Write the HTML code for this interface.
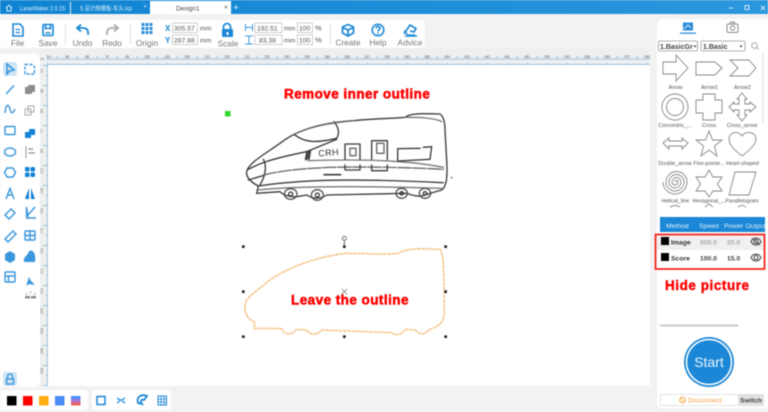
<!DOCTYPE html>
<html><head><meta charset="utf-8">
<style>
html,body{margin:0;padding:0;width:768px;height:412px;overflow:hidden;background:#f2f2f2}
svg{display:block;position:absolute;left:0;top:0;filter:blur(.4px)}
text{font-family:"Liberation Sans","Noto Sans CJK SC",sans-serif}
</style></head><body>
<svg width="768" height="412" viewBox="0 0 768 412" xmlns="http://www.w3.org/2000/svg">
<defs>
<linearGradient id="tb" x1="0" x2="1" y1="0" y2="0"><stop offset="0" stop-color="#0f84d2"/><stop offset="1" stop-color="#2b97de"/></linearGradient>
<pattern id="rt" x="47" y="0" width="20" height="10" patternUnits="userSpaceOnUse"><path d="M.5 3V10M2.500 8V10M4.500 8V10M6.500 8V10M8.500 8V10M10.500 6V10M12.500 8V10M14.500 8V10M16.500 8V10M18.500 8V10" stroke="#7fb3d8" stroke-width=".8" fill="none"/></pattern>
<pattern id="rl" x="0" y="65" width="10" height="20" patternUnits="userSpaceOnUse"><path d="M3 .5H10M8 2.500H10M8 4.500H10M8 6.500H10M8 8.500H10M6 10.500H10M8 12.500H10M8 14.500H10M8 16.500H10M8 18.500H10" stroke="#7fb3d8" stroke-width=".8" fill="none"/></pattern>
</defs>
<rect width="768" height="412" fill="#f2f2f2"/>
<!-- title bar -->
<rect width="768" height="14" fill="url(#tb)"/>
<path d="M6 8L9 5.200L12 8M7 7.500V11H11V7.500" stroke="#d5eaf8" fill="none"/>
<text x="20" y="10.500" font-size="6.400" fill="#d9edfa" textLength="45" lengthAdjust="spacingAndGlyphs">LaserMaker 2.0.15</text>
<rect x="70" y="2" width="1" height="12" fill="#d5eaf8"/>
<text x="80" y="10.500" font-size="6" fill="#d9edfa" textLength="52" lengthAdjust="spacingAndGlyphs">5.设计图模板-车头.lcp</text>
<text x="143.500" y="8.500" font-size="6" fill="#d9edfa">×</text>
<rect x="150" y="1" width="81" height="13" fill="#fff"/>
<text x="176" y="10.500" font-size="6.400" fill="#444">Design1</text>
<text x="224" y="9.500" font-size="7" fill="#555">×</text>
<text x="233.500" y="10.500" font-size="9" fill="#fff">+</text>
<path d="M729 8H733" stroke="#d5eaf8"/><rect x="745" y="5.500" width="4" height="4" fill="none" stroke="#d5eaf8"/><path d="M761 6L765 10M765 6L761 10" stroke="#d5eaf8"/>
<!-- main toolbar -->
<rect x="-6" y="20" width="431" height="28" rx="5" fill="#fff"/>
<rect x="65" y="24" width="1" height="20" fill="#ddd"/><rect x="130" y="24" width="1" height="20" fill="#ddd"/><rect x="330" y="24" width="1" height="20" fill="#ddd"/>
<g font-size="8.300" fill="#777" text-anchor="middle">
<text x="17.500" y="46">File</text><text x="48" y="46">Save</text><text x="82.500" y="46">Undo</text><text x="112" y="46">Redo</text><text x="147" y="46">Origin</text><text x="228" y="46.500">Scale</text><text x="348" y="45.500">Create</text><text x="378" y="45.500">Help</text><text x="410" y="45.500">Advice</text>
</g>
<g fill="none" stroke="#1b87d6" stroke-width="1.600">
<path d="M13 24H20L23 27.500V36H13Z"/><path d="M15.500 29.500H20M15.500 32.500H20" stroke-width="1.200"/>
<rect x="43" y="24.500" width="10" height="11" rx="1"/><path d="M45.500 25V28.500H50.500V25M45.500 33H50.500"/>
<path d="M88 35C89 28 85 27.500 78 28M81 24.500L77 28L81 31.500" stroke-width="1.800"/>
<path d="M107 35C106 28 110 27.500 117 28M114 24.500L118 28L114 31.500" stroke="#aaa" stroke-width="1.800"/>
<path d="M223.500 29V27C223.500 22.500 230.500 22.500 230.500 27V29" stroke-width="1.800"/>
<path d="M348 24.500L353.500 27V33L348 36L342.500 33V27ZM342.500 27.500L348 30L353.500 27.500M348 30V36" stroke-width="1.700"/>
<circle cx="378" cy="30" r="5.800" stroke-width="1.500"/><path d="M376 28.500C376 25.500 380.500 26 380 28.500C379.800 30 378 29.800 378 31.500M378 32.500V34"/>
<path d="M404 34L410 25L416 28.500L414 32L410 31M405 36H417" stroke-width="1.600"/><path d="M404 30.500L408 35H415" stroke-width="1.300"/>
</g>
<rect x="222" y="29" width="11" height="8" rx="1" fill="#1b87d6"/><rect x="226.500" y="32" width="2" height="3" fill="#fff"/>
<g fill="#2a8bd8"><rect x="141.500" y="23" width="3" height="3"/><rect x="145.500" y="23" width="3" height="3"/><rect x="149.500" y="23" width="3" height="3"/><rect x="141.500" y="27" width="3" height="3"/><rect x="145.500" y="27" width="3" height="3"/><rect x="149.500" y="27" width="3" height="3"/><rect x="141.500" y="31" width="3" height="3"/><rect x="145.500" y="31" width="3" height="3"/><rect x="149.500" y="31" width="3" height="3"/></g>
<text x="165" y="31" font-size="8" font-weight="bold" fill="#1b87d6">X</text>
<text x="165" y="43" font-size="8" font-weight="bold" fill="#1b87d6">Y</text>
<g fill="#fff" stroke="#c4c4c4" stroke-width=".8"><rect x="172.500" y="23" width="25" height="9.500"/><rect x="172.500" y="35" width="25" height="9.500"/><rect x="255" y="23" width="27" height="9.500"/><rect x="255" y="35" width="27" height="9.500"/><rect x="297.500" y="23" width="15" height="9.500"/><rect x="297.500" y="35" width="15" height="9.500"/></g>
<g font-size="6.800" fill="#555"><text x="174" y="30.500">305.57</text><text x="174" y="42.500">287.88</text><text x="257" y="30.500">192.51</text><text x="259" y="42.500">83.38</text><text x="299" y="30.500">100</text><text x="299" y="42.500">100</text>
<text x="200" y="30.500">mm</text><text x="200" y="42.500">mm</text><text x="284" y="30.500">mm</text><text x="284" y="42.500">mm</text><text x="315" y="30.500" font-size="7.500">%</text><text x="315" y="42.500" font-size="7.500">%</text></g>
<path d="M245.500 24V31M252.500 24V31M246 27.500H252M245 36H253M245 44H253M249 36.500V43.500" stroke="#3a96db" fill="none"/>
<!-- rulers -->
<rect x="40" y="48" width="610" height="17" fill="#efefef"/>
<rect x="40" y="48" width="8" height="338" fill="#efefef"/>
<rect x="47" y="55" width="603" height="10" fill="url(#rt)"/>
<rect x="40" y="65" width="8" height="321" fill="url(#rl)"/>
<rect x="47" y="64" width="603" height=".8" fill="#8dbcdd"/>
<rect x="47" y="64" width=".8" height="322" fill="#8dbcdd"/>
<g font-size="3.800" fill="#777" text-anchor="middle">
<text x="41" y="60">mm</text>
<text x="49" y="58">19</text><text x="67" y="58">38</text><text x="87" y="58">58</text><text x="107" y="58">77</text><text x="127" y="58">96</text><text x="147" y="58">115</text><text x="167" y="58">135</text><text x="187" y="58">154</text><text x="207" y="58">173</text><text x="227" y="58">192</text><text x="247" y="58">211</text><text x="267" y="58">231</text><text x="287" y="58">250</text><text x="307" y="58">269</text><text x="327" y="58">288</text><text x="347" y="58">308</text><text x="367" y="58">327</text><text x="387" y="58">346</text><text x="407" y="58">365</text><text x="427" y="58">385</text><text x="447" y="58">404</text><text x="467" y="58">423</text><text x="487" y="58">442</text><text x="507" y="58">461</text><text x="527" y="58">481</text><text x="547" y="58">500</text><text x="567" y="58">519</text><text x="587" y="58">538</text><text x="607" y="58">558</text><text x="627" y="58">577</text><text x="647" y="58">596</text>
</g>
<g font-size="3.800" fill="#777" text-anchor="middle">
<text transform="translate(43,71) rotate(-90)">19</text><text transform="translate(43,91) rotate(-90)">38</text><text transform="translate(43,111) rotate(-90)">58</text><text transform="translate(43,131) rotate(-90)">77</text><text transform="translate(43,151) rotate(-90)">96</text><text transform="translate(43,171) rotate(-90)">115</text><text transform="translate(43,191) rotate(-90)">135</text><text transform="translate(43,211) rotate(-90)">154</text><text transform="translate(43,231) rotate(-90)">173</text><text transform="translate(43,251) rotate(-90)">192</text><text transform="translate(43,271) rotate(-90)">211</text><text transform="translate(43,291) rotate(-90)">231</text><text transform="translate(43,311) rotate(-90)">250</text><text transform="translate(43,331) rotate(-90)">269</text><text transform="translate(43,351) rotate(-90)">288</text><text transform="translate(43,371) rotate(-90)">308</text>
</g>
<!-- canvas -->
<rect x="48" y="65" width="602" height="321" fill="#fff"/>
<!-- left panel -->
<rect x="-6" y="54" width="46" height="333" rx="5" fill="#fff"/>
<rect x="3" y="62" width="14" height="14" rx="2.500" fill="#cfe4f5"/>
<rect x="3" y="372" width="14" height="14" rx="2.500" fill="#cfe4f5"/>
<g fill="none" stroke="#3a96db" stroke-width="1.400">
<path d="M7 64V74L9.500 71L14 70Z" stroke-width="1.600"/>
<path d="M25 64.500H32L34.500 67V74H25Z" stroke-dasharray="3 1.500"/>
<path d="M6 94L14 85.500"/>
<path d="M5 113C6 102 9 105 10 109C11 114 13 114 15 109"/>
<rect x="5" y="126.500" width="10" height="8" rx="1"/>
<ellipse cx="10" cy="152" rx="5.500" ry="4"/>
<path d="M7 168H13L15.500 172.500L13 177H7L4.500 172.500Z" stroke-linejoin="round"/>
<path d="M6 199L10 188.500L14 199M7.500 195H12.500"/>
<path d="M5 215L11 209L15 213L9 219Z"/>
<path d="M5 239L13 231L16 234L8 242Z"/>
<rect x="5" y="272" width="10" height="10" rx="1"/><path d="M5 276H15M8.500 276V282"/>
<rect x="25" y="231" width="10" height="9" rx="1"/><path d="M25 235.500H35M30 231V240"/>
<path d="M7.500 379V377C7.500 373 12.500 373 12.500 377V379"/><rect x="6.500" y="379" width="7" height="5"/>
<path d="M26 218H36M26.500 217V207L28 217M28 215L35 207"/>
</g>
<g fill="#3a96db">
<path d="M5 254L10 251L15 254V260L10 263L5 260Z"/>
<path d="M24 262C23 256 28 256 29 251C34 249 36 255 35 262Z"/>
<path d="M26 286L29 277L31 281L35 285L29 284Z"/>
</g>
<g fill="#1283d6">
<rect x="29" y="129" width="6" height="6"/><rect x="25" y="132" width="6" height="6"/>
<rect x="25" y="167" width="4.500" height="4.500" rx="1"/><rect x="30.500" y="167" width="4.500" height="4.500" rx="1"/><rect x="25" y="172.500" width="4.500" height="4.500" rx="1"/><rect x="30.500" y="172.500" width="4.500" height="4.500" rx="1"/>
<path d="M29 188L25 199H29ZM31 188L35 199H31Z"/>
</g>
<g fill="#8c8c8c">
<rect x="25" y="87" width="7" height="7"/><rect x="28" y="85" width="7" height="7"/>
<rect x="25" y="296" width="5" height="2.500"/><rect x="31" y="296" width="5" height="2.500"/>
</g>
<g fill="none" stroke="#aaa"><rect x="25" y="109" width="6" height="6"/><rect x="28" y="106" width="6" height="6"/><path d="M26 146V158" stroke-width="1.300"/><path d="M28.500 149H33M28.500 153H35" stroke-width="1.800"/><path d="M30.500 294V291M27 295L25.500 293M34 295L35.500 293"/></g>
<!-- bottom panels -->
<rect x="-5" y="390" width="93" height="20" rx="4" fill="#fff"/>
<rect x="92" y="390" width="79" height="20" rx="4" fill="#fff"/>
<rect x="7" y="396" width="9.500" height="9.500" fill="#000"/><rect x="23" y="396" width="9.500" height="9.500" fill="#f00"/><rect x="39" y="396" width="9.500" height="9.500" fill="#ffae14"/><rect x="55" y="396" width="9.500" height="9.500" fill="#4a8cf5"/>
<rect x="71" y="396" width="9.500" height="3" fill="#4a8cf5"/><rect x="71" y="399" width="9.500" height="3.500" fill="#a776d8"/><rect x="71" y="402.500" width="9.500" height="3" fill="#f2625f"/>
<g fill="none" stroke="#1b87d6" stroke-width="1.500">
<rect x="97" y="396.500" width="8" height="8"/>
<path d="M117 398L120 400L122 400M125 398L122 400M117 403L120 401M125 403L122 401" stroke-width="1.300"/>
<path d="M138 403C136 396 142 394 147 396L144 400C141 399 140 401 142 404Z" stroke-width="1.800"/>
<rect x="158" y="396" width="8.500" height="9" stroke-width="1"/><path d="M161 396V405M164 396V405M158 399H166M158 402H166" stroke-width=".8"/>
</g>
<!-- right panel -->
<rect x="657" y="19" width="120" height="389" rx="5" fill="#fff"/>
<rect x="683" y="22.500" width="10" height="8" fill="#2a8bd8"/><path d="M684 29L688 25L691 28" stroke="#fff" stroke-width=".8" fill="none"/>
<rect x="680" y="32.500" width="16" height="1.300" fill="#2a8bd8"/>
<rect x="727" y="24" width="11" height="8.500" rx="1.500" fill="none" stroke="#888"/><circle cx="732.500" cy="28" r="2.200" fill="none" stroke="#888"/><path d="M730 24L731 22H734L735 24" stroke="#888" fill="none"/>
<g fill="#fff" stroke="#999" stroke-width=".8"><rect x="658.500" y="41" width="39" height="10" rx="1.500"/><rect x="701" y="41" width="44" height="10" rx="1.500"/></g>
<text x="660" y="49" font-size="7" font-weight="bold" fill="#444">1.BasicGra</text><rect x="693" y="42" width="4" height="8" fill="#fff"/><path d="M693.500 45.500H696.500L695 47.500Z" fill="#333"/>
<text x="703" y="49" font-size="7" font-weight="bold" fill="#444">1.Basic</text><path d="M739.500 45.500H742.500L741 47.500Z" fill="#333"/>
<circle cx="754.500" cy="45.500" r="2.800" fill="none" stroke="#aaa"/><path d="M756.500 47.500L758.500 49.500" stroke="#aaa"/>
<rect x="762" y="53" width="2" height="70" fill="#ececec"/>
<g fill="none" stroke="#888" stroke-width=".9">
<path d="M663 62H676V55L688 68L676 81V74H663Z"/>
<path d="M696 62H715L722 68L715 75H696Z"/>
<path d="M730 60H749L756 68L749 76H730L738 68Z"/>
<circle cx="675" cy="107" r="13"/><circle cx="675" cy="107" r="8.500"/>
<path d="M703 94H715V100H722V113H715V120H703V113H696V100H703Z"/>
<path d="M742 93L747 99H745V104H750V102L756 107L750 112V110H745V115H747L742 121L737 115H739V110H734V112L729 107L734 102V104H739V99H737Z"/>
<path d="M663 143L669 138V141H682V138L688 143L682 149V146H669V149Z"/>
<path d="M709 131L712.500 140H722L714.500 146L717 156L709 150L701 156L703.500 146L696 140H705.500Z"/>
<path d="M742 156C733 149 729 144 729 139C729 132 738 130 742 136C746 130 756 132 756 139C756 144 751 149 742 156Z"/>
<path d="M675 182a1.500 1.500 0 0 1 3 0a3 3 0 0 1-6 0a4.500 4.500 0 0 1 9 0a6 6 0 0 1-12 0a7.500 7.500 0 0 1 15 0a9 9 0 0 1-18 0a10.500 10.500 0 0 1 21 0a12 12 0 0 1-24 0"/>
<path d="M709 170L713 177H722L717.500 184L722 191H713L709 197L705 191H696L700.500 184L696 177H705Z"/>
<path d="M735 172H756L749 195H729Z"/>
<path d="M670 207C673 205 677 205 680 207M705 207L709 204L713 207M738 207L742 205L746 207"/>
</g>
<g font-size="5.400" fill="#555" text-anchor="middle">
<text x="675.500" y="89">Arrow</text><text x="709.500" y="89">Arrow1</text><text x="742.500" y="89">Arrow2</text>
<text x="675" y="127">Concentric_...</text><text x="709" y="127">Cross</text><text x="742" y="127">Cross_arrow</text>
<text x="675" y="165">Double_arrow</text><text x="709" y="165">Five-pointe...</text><text x="742.500" y="165">Heart-shaped</text>
<text x="675.500" y="202.500">Helical_line</text><text x="709" y="202.500">Hexagonal_...</text><text x="742" y="202.500">Parallelogram</text>
</g>
<!-- layer table -->
<rect x="660" y="217" width="105" height="15" fill="#1b87d6"/>
<g font-size="6.800" fill="#dff0fb"><text x="666" y="228">Method</text><text x="699" y="228">Speed</text><text x="724" y="228">Power</text><text x="745.500" y="228">Output</text></g>
<rect x="656" y="235" width="108" height="15" fill="#f0f0f0"/>
<rect x="661" y="237" width="8" height="8" fill="#000"/><rect x="661" y="253" width="8" height="8" fill="#000"/>
<g font-size="6.800" font-weight="bold"><text x="671" y="244.500" fill="#333">Image</text><text x="671" y="260.500" fill="#333">Score</text><text x="700" y="244.500" fill="#aaa">500.0</text><text x="727" y="244.500" fill="#aaa">20.0</text><text x="700" y="260.500" fill="#444">100.0</text><text x="727" y="260.500" fill="#444">15.0</text></g>
<g fill="none" stroke="#444"><path d="M751 241.500C753 237 759 237 761 241.500C759 246 753 246 751 241.500Z"/><circle cx="756" cy="241.500" r="2"/><path d="M752 238L760 245" stroke-width=".8"/>
<path d="M751 257.500C753 253 759 253 761 257.500C759 262 753 262 751 257.500Z"/><circle cx="756" cy="257.500" r="2"/></g>
<rect x="655.500" y="234.500" width="109" height="34.500" fill="none" stroke="#f5271f" stroke-width="1.800"/>
<text x="665" y="290" font-size="13.500" font-weight="bold" fill="#f00" stroke="#f00" stroke-width=".4" letter-spacing=".55">Hide picture</text>
<rect x="660" y="324.500" width="78" height="2" fill="#c9c9c9"/>
<circle cx="709" cy="362" r="25" fill="#1b87d6"/><circle cx="709" cy="362" r="22.500" fill="#1b87d6" stroke="#fff" stroke-width="1.500"/>
<text x="709" y="367" font-size="14" fill="#e8f4fc" text-anchor="middle">Start</text>
<rect x="660.500" y="394.500" width="78" height="11" fill="#fff" stroke="#ddd" stroke-width=".8"/>
<rect x="738" y="394" width="26" height="12" fill="#e1e1e1"/>
<text x="751" y="402.500" font-size="6.800" fill="#444" text-anchor="middle" font-weight="bold">Switch</text>
<circle cx="682.500" cy="400" r="2.800" fill="none" stroke="#f5a243"/><path d="M681 398.500L684 401.500" stroke="#f5a243" stroke-width=".7"/>
<text x="688" y="402.500" font-size="6.800" fill="#f5a243">Disconnect</text>
<!-- canvas content -->
<rect x="225" y="111" width="5.500" height="5.500" fill="#2ed52e"/>
<text x="284" y="98.500" font-size="13.500" font-weight="bold" fill="#f00" stroke="#f00" stroke-width=".5" letter-spacing=".45">Remove inner outline</text>
<g transform="translate(220,80) scale(.33333)" fill="none" stroke="#3a3a3a" stroke-width="4" stroke-linejoin="round" stroke-linecap="round">
<path d="M80 275C85 250 130 225 180 190C230 150 300 130 400 122C470 115 530 115 555 112C570 100 600 100 660 102C672 110 675 130 675 150L680 240C683 290 680 320 665 330L630 340C600 352 590 350 560 340L320 345C300 358 280 358 260 345L230 350C210 352 190 345 180 335L110 340L115 318C90 305 78 290 80 275Z"/>
<path d="M555 112C590 112 640 112 665 125" stroke="#777"/>
<path d="M222 163C250 185 280 192 350 175C360 160 355 140 342 125"/>
<path d="M222 163C270 140 330 125 405 122" stroke="#666"/>
<path d="M85 268C110 255 135 240 260 215L350 178"/>
<path d="M130 238C142 260 135 290 120 315"/>
<path d="M85 300L135 285"/>
<path d="M265 242C400 238 550 238 670 262" stroke="#777"/>
<path d="M130 285C200 268 270 265 330 262C450 260 560 262 670 268" stroke="#666" stroke-dasharray="40 5"/>
<path d="M115 318C250 298 400 295 670 308"/>
<path d="M115 330C250 315 500 320 665 325" stroke="#777"/>
<path d="M375 238V192H420V238M375 255V270H420V255"/>
<rect x="390" y="205" width="18" height="22" stroke="#666"/>
<path d="M455 238V182H502V238M455 255V272H502V255"/>
<rect x="470" y="190" width="22" height="30" stroke="#666"/>
<path d="M600 205L533 206L533 243L630 238L635 200L610 202"/>
<path d="M262 215L258 238M270 212L266 236" stroke-width="7"/>
<path d="M312 284H362" stroke-width="5" stroke-dasharray="5 1.500"/>
<ellipse cx="212" cy="342" rx="19" ry="16" stroke="#555"/><circle cx="212" cy="342" r="6"/>
<ellipse cx="292" cy="345" rx="18" ry="16" stroke="#555"/><circle cx="292" cy="345" r="6"/>
<ellipse cx="545" cy="340" rx="17" ry="15" stroke="#555"/><circle cx="545" cy="340" r="5"/>
<ellipse cx="615" cy="340" rx="17" ry="15" stroke="#555"/><circle cx="615" cy="340" r="5"/>
</g>
<text x="318.500" y="156.500" font-size="9" fill="#333" transform="rotate(-4 318 157)" letter-spacing=".4">CRH</text>
<circle cx="451.500" cy="177.500" r=".8" fill="#333"/>
<g transform="translate(235,230) scale(.33333)">
<path d="M30 230C30 205 50 195 80 170C130 125 220 85 330 70C390 70 450 75 490 70C510 55 560 55 615 58C625 70 625 100 628 180L628 250C625 280 610 290 580 300C570 315 555 315 540 300L510 298C500 315 485 318 470 308L260 300C245 318 225 315 215 300L185 298C170 315 150 318 140 296L58 295L58 275C40 270 28 250 30 230Z" fill="none" stroke="#f7c48a" stroke-width="4.800" stroke-dasharray="11 2"/>
<g fill="#222"><rect x="21" y="46" width="8" height="8"/><rect x="324" y="46" width="8" height="8"/><rect x="628" y="46" width="8" height="8"/><rect x="21" y="181" width="8" height="8"/><rect x="628" y="181" width="8" height="8"/><rect x="21" y="316" width="8" height="8"/><rect x="324" y="316" width="8" height="8"/><rect x="628" y="316" width="8" height="8"/></g>
<path d="M320 177L336 193M336 177L320 193" stroke="#888" stroke-width="2.500"/>
<path d="M328 32V46" stroke="#666" stroke-width="3"/><circle cx="328" cy="25" r="6" fill="none" stroke="#777" stroke-width="3"/>
</g>
<text x="291" y="304.500" font-size="13.500" font-weight="bold" fill="#f00" stroke="#f00" stroke-width=".5" letter-spacing=".45">Leave the outline</text>
</svg>
</body></html>
